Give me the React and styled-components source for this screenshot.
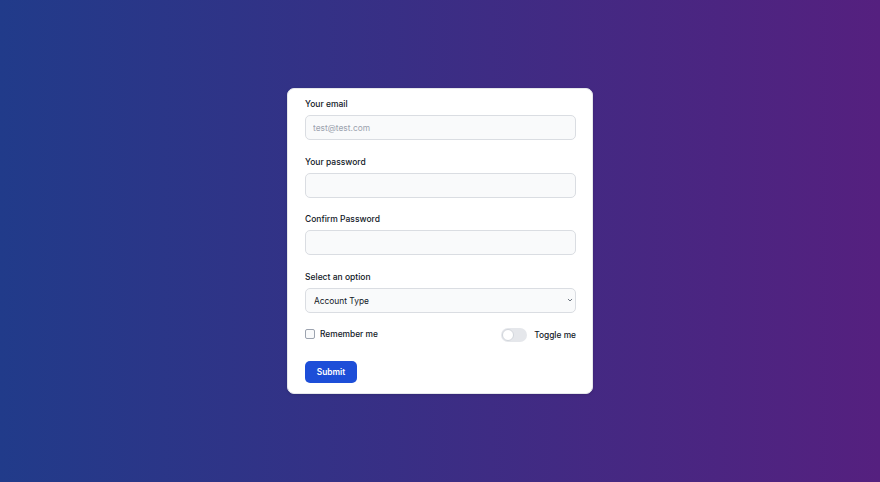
import styled, { createGlobalStyle } from "styled-components";

const GlobalStyle = createGlobalStyle`
  html, body {
    margin: 0;
    padding: 0;
    height: 100%;
  }
  body {
    font-family: Inter, "Noto Sans", "Liberation Sans", sans-serif;
    -webkit-font-smoothing: antialiased;
  }
  * { box-sizing: border-box; }
`;

const Page = styled.main`
  height: 100vh;
  display: flex;
  align-items: center;
  justify-content: center;
  background: linear-gradient(to right, #213b8a, #55207f);
`;

const Card = styled.form`
  width: 306px;
  height: 306px;
  padding: 9px 16px 10px 17px;
  background: #fff;
  border: 1px solid #e5e7eb;
  border-radius: 7px;
  box-shadow: 0 1px 3px rgba(0, 0, 0, 0.12);
  display: flex;
  flex-direction: column;
`;

const Field = styled.div`
  display: flex;
  flex-direction: column;
  margin-bottom: 15.7px;
`;

const Label = styled.label`
  font-size: 8.5px;
  line-height: 12px;
  font-weight: 500;
  color: #111827;
  margin-bottom: 5px;
`;

const Input = styled.input`
  height: 25px;
  width: 100%;
  padding: 0 7px;
  font-family: inherit;
  font-size: 8.4px;
  color: #111827;
  background: #f9fafb;
  border: 1px solid #dadde2;
  border-radius: 5px;
  outline: none;
  &::placeholder {
    color: #9ca3af;
  }
`;

const SelectWrap = styled.div`
  position: relative;
  width: 100%;
`;

const Select = styled.select`
  appearance: none;
  -webkit-appearance: none;
  display: block;
  height: 25px;
  width: 100%;
  padding: 0 16px 0 8px;
  font-family: inherit;
  font-size: 8.4px;
  color: #111827;
  background: #f9fafb;
  border: 1px solid #dadde2;
  border-radius: 5px;
  outline: none;
`;

const Chevron = styled.svg`
  position: absolute;
  right: 3px;
  top: 9px;
  width: 6px;
  height: 6px;
  pointer-events: none;
`;

const OptionsRow = styled.div`
  display: flex;
  justify-content: space-between;
  align-items: center;
  margin-top: -0.7px;
  margin-bottom: 18.6px;
  height: 14.4px;
`;

const CheckLabel = styled.label`
  display: flex;
  align-items: center;
  gap: 5px;
  font-size: 8.4px;
  font-weight: 500;
  color: #111827;
  margin-top: -2px;
`;

const Box = styled.span`
  width: 10px;
  height: 10px;
  border: 1px solid #9ca3af;
  border-radius: 2px;
  background: #f9fafb;
`;

const ToggleLabel = styled.label`
  display: flex;
  align-items: center;
  gap: 7px;
  font-size: 8.4px;
  font-weight: 500;
  color: #111827;
`;

const Track = styled.span`
  position: relative;
  width: 26.5px;
  height: 14.4px;
  border-radius: 8px;
  background: ${({ $on }) => ($on ? "#2563eb" : "#e5e7eb")};
  &::after {
    content: "";
    position: absolute;
    top: 1.2px;
    left: ${({ $on }) => ($on ? "13.3px" : "1.2px")};
    width: 12px;
    height: 12px;
    border-radius: 50%;
    background: #fff;
    border: 1px solid #d1d5db;
    box-sizing: border-box;
  }
`;

const Submit = styled.button`
  align-self: flex-start;
  height: 24px;
  width: 52px;
  padding: 0;
  font-family: inherit;
  font-size: 8.4px;
  font-weight: 600;
  color: #fff;
  background: #1d4ed8;
  border: none;
  border-radius: 5px;
`;

export default function App() {
  return (
    <>
      <GlobalStyle />
      <Page>
        <Card onSubmit={(e) => e.preventDefault()}>
          <Field>
            <Label htmlFor="email">Your email</Label>
            <Input id="email" type="email" placeholder="test@test.com" />
          </Field>
          <Field>
            <Label htmlFor="password">Your password</Label>
            <Input id="password" type="password" />
          </Field>
          <Field>
            <Label htmlFor="confirm">Confirm Password</Label>
            <Input id="confirm" type="password" />
          </Field>
          <Field>
            <Label htmlFor="account">Select an option</Label>
            <SelectWrap>
              <Select id="account" defaultValue="">
                <option value="">Account Type</option>
                <option value="personal">Personal</option>
                <option value="business">Business</option>
              </Select>
              <Chevron viewBox="0 0 12 12" fill="none">
                <path d="M2.5 4.5 6 8l3.5-3.5" stroke="#4b5563" strokeWidth="1.6" strokeLinecap="round" strokeLinejoin="round" />
              </Chevron>
            </SelectWrap>
          </Field>
          <OptionsRow>
            <CheckLabel>
              <Box />
              Remember me
            </CheckLabel>
            <ToggleLabel>
              <Track />
              Toggle me
            </ToggleLabel>
          </OptionsRow>
          <Submit type="submit">Submit</Submit>
        </Card>
      </Page>
    </>
  );
}
